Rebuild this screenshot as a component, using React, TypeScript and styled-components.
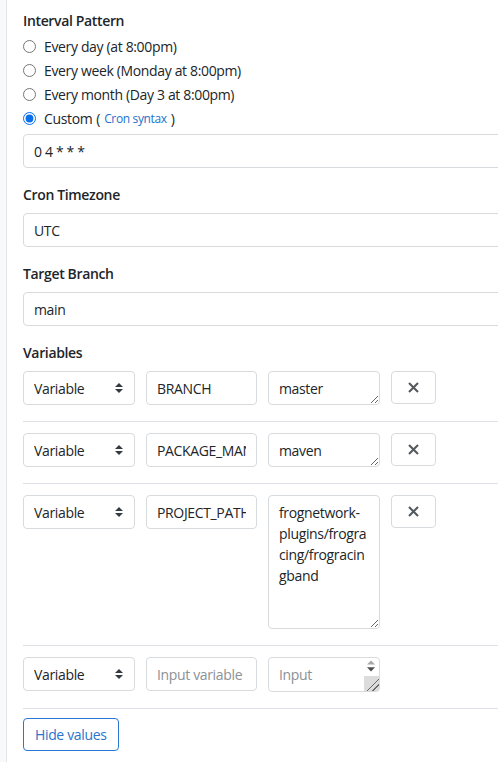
import React from "react";
import styled, { createGlobalStyle } from "styled-components";

const Global = createGlobalStyle`
  html, body { margin: 0; padding: 0; background: #fff; overflow: hidden; }
  body {
    font-family: "Open Sans", "Noto Sans", Arial, sans-serif;
    font-size: 14px;
    line-height: 21px;
    letter-spacing: -0.35px;
    color: #212529;
  }
  * { box-sizing: border-box; }
`;

const Page = styled.div`
  display: flex;
  width: 640px;
  min-height: 762px;
`;

const Rail = styled.div`
  flex: none;
  width: 7px;
  background: #f8f9fa;
  border-right: 1px solid #e4e6e8;
`;

const Main = styled.div`
  flex: 1;
  min-width: 0;
  padding: 10px 0 0 16px;
`;

const FieldGroup = styled.div`
  margin-bottom: 16px;
`;

const Label = styled.label<{ $tight?: boolean }>`
  display: block;
  font-weight: 600;
  color: #212529;
  margin-bottom: ${(p) => (p.$tight ? "0" : "8px")};
`;

const RadioList = styled.div`
  display: flex;
  flex-direction: column;
  margin: 3px 0 4px;
`;

const RadioRow = styled.label`
  display: flex;
  align-items: center;
  height: 24px;
  cursor: pointer;
`;

const Radio = styled.input`
  width: 13px;
  height: 13px;
  margin: 0 8px 0 0;
  accent-color: #0b6fe8;
`;

const Paren = styled.span`
  margin: 0 4px;
`;

const Link = styled.a`
  color: #2371c9;
  font-size: 12px;
  text-decoration: none;
`;

const TextInput = styled.input`
  display: block;
  width: 100%;
  height: 34px;
  padding: 0 10px;
  border: 1px solid #d8dbde;
  border-radius: 4px;
  font: inherit;
  letter-spacing: inherit;
  color: #212529;
  background: #fff;
  outline: none;
  &::placeholder { color: #8c9196; }
`;

const VariableList = styled.div`
  display: flex;
  flex-direction: column;
`;

const VariableRow = styled.div`
  display: grid;
  grid-template-columns: 112px 111px 112px 45px;
  column-gap: 11px;
  align-items: start;
  padding-bottom: 16px;
  border-bottom: 1px solid #dee2e6;
  margin-bottom: 11px;
  &:last-child { margin-bottom: 9px; }
`;

const SelectWrap = styled.div`
  position: relative;
`;

const Select = styled.select`
  display: block;
  width: 100%;
  height: 34px;
  padding: 0 28px 0 10px;
  border: 1px solid #d8dbde;
  border-radius: 4px;
  font: inherit;
  letter-spacing: inherit;
  color: #212529;
  background: #fff;
  appearance: none;
  outline: none;
`;

const SelectArrow = styled.svg`
  position: absolute;
  right: 12px;
  top: 12px;
  width: 8px;
  height: 10px;
  pointer-events: none;
`;

const ValueWrap = styled.div`
  position: relative;
`;

const ScrollArrows = styled.svg`
  position: absolute;
  top: 1px;
  right: 1px;
  width: 16px;
  height: 16px;
  pointer-events: none;
`;

const ValueArea = styled.textarea<{ $h: number; $scroll?: boolean }>`
  display: block;
  width: 100%;
  height: ${(p) => p.$h}px;
  padding: 6px 10px;
  border: 1px solid #d8dbde;
  border-radius: 4px;
  font: inherit;
  letter-spacing: inherit;
  line-height: 21px;
  color: #212529;
  background: #fff;
  resize: vertical;
  outline: none;
  overflow-y: ${(p) => (p.$scroll ? "scroll" : "hidden")};
  &::placeholder { color: #8c9196; }

  ${(p) =>
    p.$scroll
      ? `
  &::-webkit-scrollbar { width: 16px; background: #fff; }
  &::-webkit-scrollbar-track { background: #fff; }
  &::-webkit-scrollbar-thumb { background: transparent; }
  &::-webkit-resizer {
    background:
      linear-gradient(135deg, transparent 0 58%, #6b6b6b 58% 63%, transparent 63% 76%, #6b6b6b 76% 81%, transparent 81%),
      #dcdcdc;
  }
  `
      : ""}
`;

const RemoveButton = styled.button`
  display: flex;
  align-items: center;
  justify-content: center;
  height: 33px;
  padding: 0;
  border: 1px solid #d8dbde;
  border-radius: 4px;
  background: #fff;
  cursor: pointer;
`;

const OutlineButton = styled.button`
  height: 33px;
  padding: 0 11px;
  border: 1px solid #2a77d2;
  border-radius: 4px;
  background: #fff;
  color: #2a74cc;
  font: inherit;
  letter-spacing: inherit;
  cursor: pointer;
`;

const ArrowIcon = () => (
  <SelectArrow viewBox="0 0 4 5">
    <path d="M2 0L0 2h4zm0 5L0 3h4z" fill="#343a40" />
  </SelectArrow>
);

const CrossIcon = () => (
  <svg width="11" height="11" viewBox="0 0 11 11">
    <path d="M1 1L10 10M10 1L1 10" stroke="#555a5f" strokeWidth="2.1" />
  </svg>
);

type Variable = { name: string; value: string; h: number };

const variables: Variable[] = [
  { name: "BRANCH", value: "master", h: 34 },
  { name: "PACKAGE_MANAGER", value: "maven", h: 34 },
  { name: "PROJECT_PATH", value: "frognetwork-plugins/frogracing/frogracingband", h: 134 },
];

const options = [
  "Every day (at 8:00pm)",
  "Every week (Monday at 8:00pm)",
  "Every month (Day 3 at 8:00pm)",
];

export default function App() {
  return (
    <>
      <Global />
      <Page>
        <Rail />
        <Main>
          <FieldGroup>
            <Label $tight>Interval Pattern</Label>
            <RadioList>
              {options.map((o) => (
                <RadioRow key={o}>
                  <Radio type="radio" name="interval" readOnly />
                  {o}
                </RadioRow>
              ))}
              <RadioRow>
                <Radio type="radio" name="interval" defaultChecked />
                Custom
                <Paren>(</Paren>
                <Link href="#">Cron syntax</Link>
                <Paren>)</Paren>
              </RadioRow>
            </RadioList>
            <TextInput defaultValue="0 4 * * *" />
          </FieldGroup>

          <FieldGroup>
            <Label>Cron Timezone</Label>
            <TextInput defaultValue="UTC" />
          </FieldGroup>

          <FieldGroup>
            <Label>Target Branch</Label>
            <TextInput defaultValue="main" />
          </FieldGroup>

          <Label>Variables</Label>
          <VariableList>
            {variables.map((v) => (
              <VariableRow key={v.name}>
                <SelectWrap>
                  <Select defaultValue="Variable">
                    <option>Variable</option>
                    <option>File</option>
                  </Select>
                  <ArrowIcon />
                </SelectWrap>
                <TextInput defaultValue={v.name} />
                <ValueArea $h={v.h} defaultValue={v.value} />
                <RemoveButton aria-label="Remove variable">
                  <CrossIcon />
                </RemoveButton>
              </VariableRow>
            ))}
            <VariableRow>
              <SelectWrap>
                <Select defaultValue="Variable">
                  <option>Variable</option>
                  <option>File</option>
                </Select>
                <ArrowIcon />
              </SelectWrap>
              <TextInput placeholder="Input variable key" />
              <ValueWrap>
                <ValueArea $h={35} $scroll placeholder="Input" />
                <ScrollArrows viewBox="0 0 16 16">
                  <polygon points="4,6.6 8,2.4 12,6.6" fill="#a8a8a8" />
                  <polygon points="4,9.2 12,9.2 8,13.4" fill="#505050" />
                </ScrollArrows>
              </ValueWrap>
            </VariableRow>
          </VariableList>
          <OutlineButton>Hide values</OutlineButton>
        </Main>
      </Page>
    </>
  );
}
